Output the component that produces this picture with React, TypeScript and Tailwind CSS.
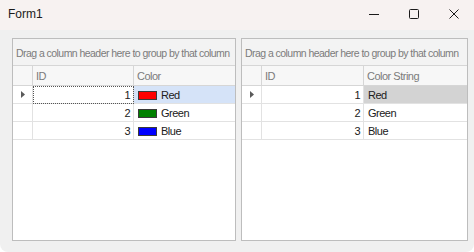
import React from "react";

type Row = { id: number; name: string; swatch: string };

const rows: Row[] = [
  { id: 1, name: "Red", swatch: "#ff0000" },
  { id: 2, name: "Green", swatch: "#008000" },
  { id: 3, name: "Blue", swatch: "#0000ff" },
];

function Indicator({ active }: { active: boolean }) {
  return (
    <div className="h-[18px] border-r border-b border-[#e2e2e2] bg-white flex items-center justify-center">
      {active && (
        <svg width="4" height="7" viewBox="0 0 4 7">
          <path d="M0 0 L4 3.5 L0 7 Z" fill="#5a5a5a" />
        </svg>
      )}
    </div>
  );
}

function GridPanel({
  title,
  cols,
  showSwatch,
}: {
  title: string;
  cols: string;
  showSwatch: boolean;
}) {
  return (
    <div className="flex flex-col border border-[#bdbdbd] bg-white h-full text-[11px] tracking-[-0.5px]">
      {/* group panel */}
      <div className="h-[27px] bg-[#f3f3f3] border-b border-[#d6d6d6] flex items-center pl-[3px] pt-[4px] text-[10.5px] tracking-[-0.55px] text-[#7b7b7b] whitespace-nowrap">
        {title}
      </div>
      <div className={`grid ${cols}`}>
        {/* header */}
        <div className="h-[20px] bg-[#f7f7f7] border-r border-b border-[#d6d6d6]" />
        <div className="h-[20px] bg-[#f7f7f7] border-r border-b border-[#d6d6d6] flex items-center pl-[3px] pt-[2px] text-[#7b7b7b]">
          ID
        </div>
        <div className="h-[20px] bg-[#f7f7f7] border-b border-[#d6d6d6] flex items-center pl-[3px] pt-[2px] text-[#7b7b7b]">
          {showSwatch ? "Color" : "Color String"}
        </div>
        {rows.map((r, i) => (
          <React.Fragment key={r.id}>
            <Indicator active={i === 0} />
            <div
              className={`h-[18px] border-r border-b border-[#e2e2e2] flex items-center justify-end pr-[3px] pt-[1px] text-[#202020] ${
                i === 0 && showSwatch ? "outline outline-1 outline-dotted outline-[#555] -outline-offset-1" : ""
              }`}
            >
              {r.id}
            </div>
            <div
              className={`h-[18px] border-b border-[#e2e2e2] flex items-center pl-[4px] gap-[4px] pt-[1px] text-[#202020] ${
                i === 0 ? (showSwatch ? "bg-[#d5e3f8]" : "bg-[#d3d3d3]") : "bg-white"
              }`}
            >
              {showSwatch && (
                <span
                  className="w-[19px] h-[9px] border border-[#3a3a3a]"
                  style={{ backgroundColor: r.swatch }}
                />
              )}
              {r.name}
            </div>
          </React.Fragment>
        ))}
      </div>
    </div>
  );
}

export default function App() {
  return (
    <div
      className="w-[474px] h-[252px] bg-white"
      style={{ fontFamily: '"Liberation Sans", Tahoma, sans-serif' }}
    >
      <div className="w-full h-full flex flex-col bg-[#f0f0f0] rounded-b-[8px] overflow-hidden">
        {/* title bar */}
        <div className="h-[30px] bg-[#f7f2f1] flex items-center pl-[8px] pb-[2px] text-[12px] text-[#1b1b1b]">
          <span className="flex-1">Form1</span>
          <div className="flex items-center">
            <div className="w-[40px] flex justify-center">
              <svg width="10" height="10" viewBox="0 0 10 10">
                <path d="M0 5.5 H10" stroke="#1b1b1b" strokeWidth="1" />
              </svg>
            </div>
            <div className="w-[40px] flex justify-center">
              <svg width="10" height="10" viewBox="0 0 10 10">
                <rect x="0.5" y="0.5" width="9" height="9" rx="1" fill="none" stroke="#1b1b1b" strokeWidth="1" />
              </svg>
            </div>
            <div className="w-[40px] flex justify-center">
              <svg width="10" height="10" viewBox="0 0 10 10">
                <path d="M0.5 0.5 L9.5 9.5 M9.5 0.5 L0.5 9.5" stroke="#1b1b1b" strokeWidth="1" />
              </svg>
            </div>
          </div>
        </div>
        {/* body */}
        <div className="flex gap-[5px] pl-[12px] pt-[8px] h-[211px]">
          <div className="w-[224px]">
            <GridPanel
              title="Drag a column header here to group by that column"
              cols="grid-cols-[20px_101px_1fr]"
              showSwatch={true}
            />
          </div>
          <div className="w-[227px]">
            <GridPanel
              title="Drag a column header here to group by that column"
              cols="grid-cols-[20px_102px_1fr]"
              showSwatch={false}
            />
          </div>
        </div>
      </div>
    </div>
  );
}
